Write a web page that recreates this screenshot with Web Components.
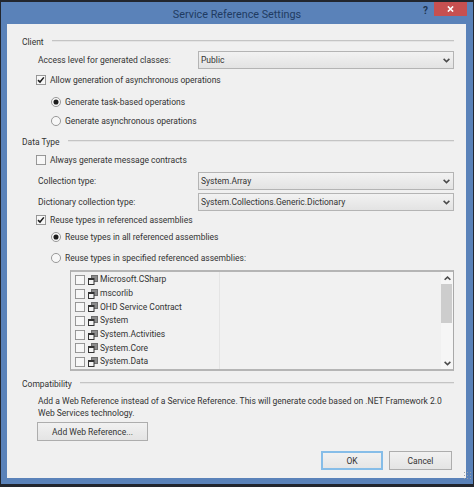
<!DOCTYPE html>
<html><head><meta charset="utf-8">
<style>html,body{margin:0;padding:0;background:#22262e}</style>
</head><body>
<x-dialog>
  <x-titlebar>Service Reference Settings</x-titlebar>
  <x-group style="--mt:10px">Client</x-group>
  <x-row style="--mt:1px">
    <span slot="label">Access level for generated classes:</span>Public
  </x-row>
  <x-option type="check" checked indent="29" style="--mt:3px">Allow generation of asynchronous operations</x-option>
  <x-option type="radio" checked indent="44" style="--mt:6px">Generate task-based operations</x-option>
  <x-option type="radio" indent="44" style="--mt:3px">Generate asynchronous operations</x-option>
  <x-group style="--mt:5px">Data Type</x-group>
  <x-option type="check" indent="29" style="--mt:2px">Always generate message contracts</x-option>
  <x-row style="--mt:4px"><span slot="label">Collection type:</span>System.Array</x-row>
  <x-row style="--mt:3px"><span slot="label">Dictionary collection type:</span>System.Collections.Generic.Dictionary</x-row>
  <x-option type="check" checked indent="29" style="--mt:1px">Reuse types in referenced assemblies</x-option>
  <x-option type="radio" checked indent="44" style="--mt:1px">Reuse types in all referenced assemblies</x-option>
  <x-option type="radio" indent="44" style="--mt:5px">Reuse types in specified referenced assemblies:</x-option>
  <x-listbox style="--mt:4px">
    <x-item>Microsoft.CSharp</x-item>
    <x-item>mscorlib</x-item>
    <x-item>OHD Service Contract</x-item>
    <x-item>System</x-item>
    <x-item>System.Activities</x-item>
    <x-item>System.Core</x-item>
    <x-item>System.Data</x-item>
  </x-listbox>
  <x-group style="--mt:5px">Compatibility</x-group>
  <x-note style="--mt:3px">Add a Web Reference instead of a Service Reference. This will generate code based on .NET Framework 2.0<br>Web Services technology.</x-note>
  <x-button style="--mt:3px;--ml:30px;--w:111px">Add Web Reference...</x-button>
  <x-footer style="--mt:10px">
    <x-button default style="--mt:0;--w:62px">OK</x-button>
    <x-button style="--mt:0;--w:63px">Cancel</x-button>
  </x-footer>
</x-dialog>
<script>
const FONT = 'Roboto,"Open Sans","Liberation Sans",sans-serif';
const def = (name, css, html, init) => {
  customElements.define(name, class extends HTMLElement {
    constructor(){ super(); const r = this.attachShadow({mode:'open'}); r.innerHTML = `<style>${css}</style>${typeof html==='function'?html(this):html}`; }
    connectedCallback(){ if(init) init(this); }
  });
};
const CHEV = d => `<svg width="7" height="5" viewBox="0 0 9 6" style="flex:none"><path d="${d}" fill="none" stroke="#4a4a4a" stroke-width="2"/></svg>`;

def('x-dialog', `
  :host{display:block;width:474px;height:487px;box-sizing:border-box;padding:2px 1px 3px 1px;background:#22262e;font:400 8.5px/16px ${FONT};color:#333;overflow:hidden}
  .frame{height:100%;background:#5a82b9;display:flex;flex-direction:column;padding:0 7px 6px 6px;box-sizing:border-box}
  .client{flex:1;background:#f0f0f0;display:flex;flex-direction:column;position:relative}
  .grip{position:absolute;right:-5px;bottom:-1px;width:8px;height:8px;background-image:radial-gradient(#9aa0a6 .6px,transparent .8px);background-size:3px 3px}
`, `<div class="frame"><slot name="title"></slot><div class="client"><slot></slot><div class="grip"></div></div></div>`,
 el => { el.querySelector('x-titlebar').slot = 'title'; });

def('x-titlebar', `
  :host{display:block;height:22px;margin:0 -7px 0 -6px;position:relative;font:400 10.8px/25px ${FONT};color:#1f3b62;text-align:center}
  .help{position:absolute;left:422px;top:0;font:700 10px/18px ${FONT};color:#1d3350}
  .close{position:absolute;left:433px;top:0;width:33px;height:14px;background:#c75050;display:flex;align-items:center;justify-content:center}
`, `<slot></slot><span class="help" aria-label="help">?</span><div class="close"><svg width="7" height="6" viewBox="0 0 9 8"><path d="M1 .5 8 7.5M8 .5 1 7.5" stroke="#fff" stroke-width="2"/></svg></div>`);

def('x-group', `
  :host{display:flex;align-items:center;height:16px;margin-top:var(--mt,0);padding:0 12px 0 15px;gap:8px}
  i{flex:1;height:1px;background:#c4c4c4;border-bottom:1px solid #e4e4e4;margin-top:-2px}
`, `<slot></slot><i></i>`);

def('x-row', `
  :host{display:flex;align-items:center;height:18px;margin-top:var(--mt,0);padding-left:31px}
  .l{width:160px;flex:none;white-space:nowrap}
  .s{width:256px;height:18px;box-sizing:border-box;border:1px solid #b4b4b4;background:linear-gradient(#f2f2f2,#e3e3e3);display:flex;align-items:center;justify-content:space-between;padding:0 3px 0 2px;line-height:16px}
`, `<div class="l"><slot name="label"></slot></div><div class="s"><span><slot></slot></span>${CHEV('M.8 1 4.5 4.4 8.2 1')}</div>`);

const CHECK = `<svg width="10" height="10" viewBox="0 0 11 11" style="display:block;flex:none"><rect x=".5" y=".5" width="10" height="10" fill="#f7f7f7" stroke="#8f8f8f"/>__</svg>`;
const MARK = `<path d="M2.2 5.6 4.4 7.8 8.6 2.6" fill="none" stroke="#1c1c1c" stroke-width="1.7"/>`;
const RADIO = `<svg width="10" height="10" viewBox="0 0 11 11" style="display:block;flex:none"><circle cx="5.5" cy="5.5" r="5" fill="#f7f7f7" stroke="#8f8f8f"/>__</svg>`;
def('x-option', `
  :host{display:flex;align-items:center;height:16px;margin-top:var(--mt,0);gap:4px;white-space:nowrap}
`, el => {
  const on = el.hasAttribute('checked');
  el.style.paddingLeft = el.getAttribute('indent') + 'px';
  return el.getAttribute('type')==='check'
    ? CHECK.replace('__', on?MARK:'') + '<slot></slot>'
    : RADIO.replace('__', on?'<circle cx="5.5" cy="5.5" r="2.8" fill="#1c1c1c"/>':'') + '<slot></slot>';
});

def('x-listbox', `
  :host{display:flex;height:101px;width:384px;margin-top:var(--mt,0);margin-left:63px;box-sizing:border-box;border:1px solid #a9a9a9;border-top:2px solid #b5b5b5;border-bottom:2px solid #b5b5b5;background:#f1f1f1}
  .items{width:148px;padding-top:1px;border-right:1px solid #e4e4e4}
  .rest{flex:1}
  .bar{width:12px;display:flex;flex-direction:column;align-items:center;justify-content:space-between;background:#f6f6f6;position:relative;padding:4px 0 3px;box-sizing:border-box}
  .thumb{position:absolute;left:0;right:1px;top:12px;height:39px;background:#cdcdcd}
`, `<div class="items"><slot></slot></div><div class="rest"></div><div class="bar">${CHEV('M.8 4.6 4.5 1.2 8.2 4.6')}<div class="thumb"></div>${CHEV('M.8 1 4.5 4.4 8.2 1')}</div>`);

def('x-item', `
  :host{display:flex;align-items:center;height:13.7px;padding-left:4px;gap:2px;white-space:nowrap;line-height:13px}
`, `${CHECK.replace('__','')}<svg width="10" height="10" viewBox="0 0 10 10" style="flex:none;margin-left:1px"><rect x="3.5" y=".5" width="6" height="6" fill="#8c8c8c" stroke="#6d6d6d"/><rect x=".5" y="3.5" width="5.5" height="6" fill="#f4f4f4" stroke="#333"/><rect x="1" y="3.5" width="5" height="1.5" fill="#333"/></svg><span><slot></slot></span>`);

def('x-note', `
  :host{display:block;margin-top:var(--mt,0);padding:0 12px 0 31px;line-height:12px;white-space:nowrap}
`, `<slot></slot>`);

def('x-button', `
  :host{display:flex;align-items:center;justify-content:center;width:var(--w);height:19px;margin-top:var(--mt,0);margin-left:var(--ml,0);box-sizing:border-box;border:1px solid #adadad;background:linear-gradient(#f1f1f1,#e4e4e4);flex:none;white-space:nowrap}
  :host([default]){border:2px solid #86bde8;background:linear-gradient(#f1f1f1,#e6e6e6)}
`, `<slot></slot>`);

def('x-footer', `
  :host{display:flex;justify-content:flex-end;gap:6px;margin-top:var(--mt,0);padding-right:14px}
`, `<slot></slot>`);
</script>
</body></html>
